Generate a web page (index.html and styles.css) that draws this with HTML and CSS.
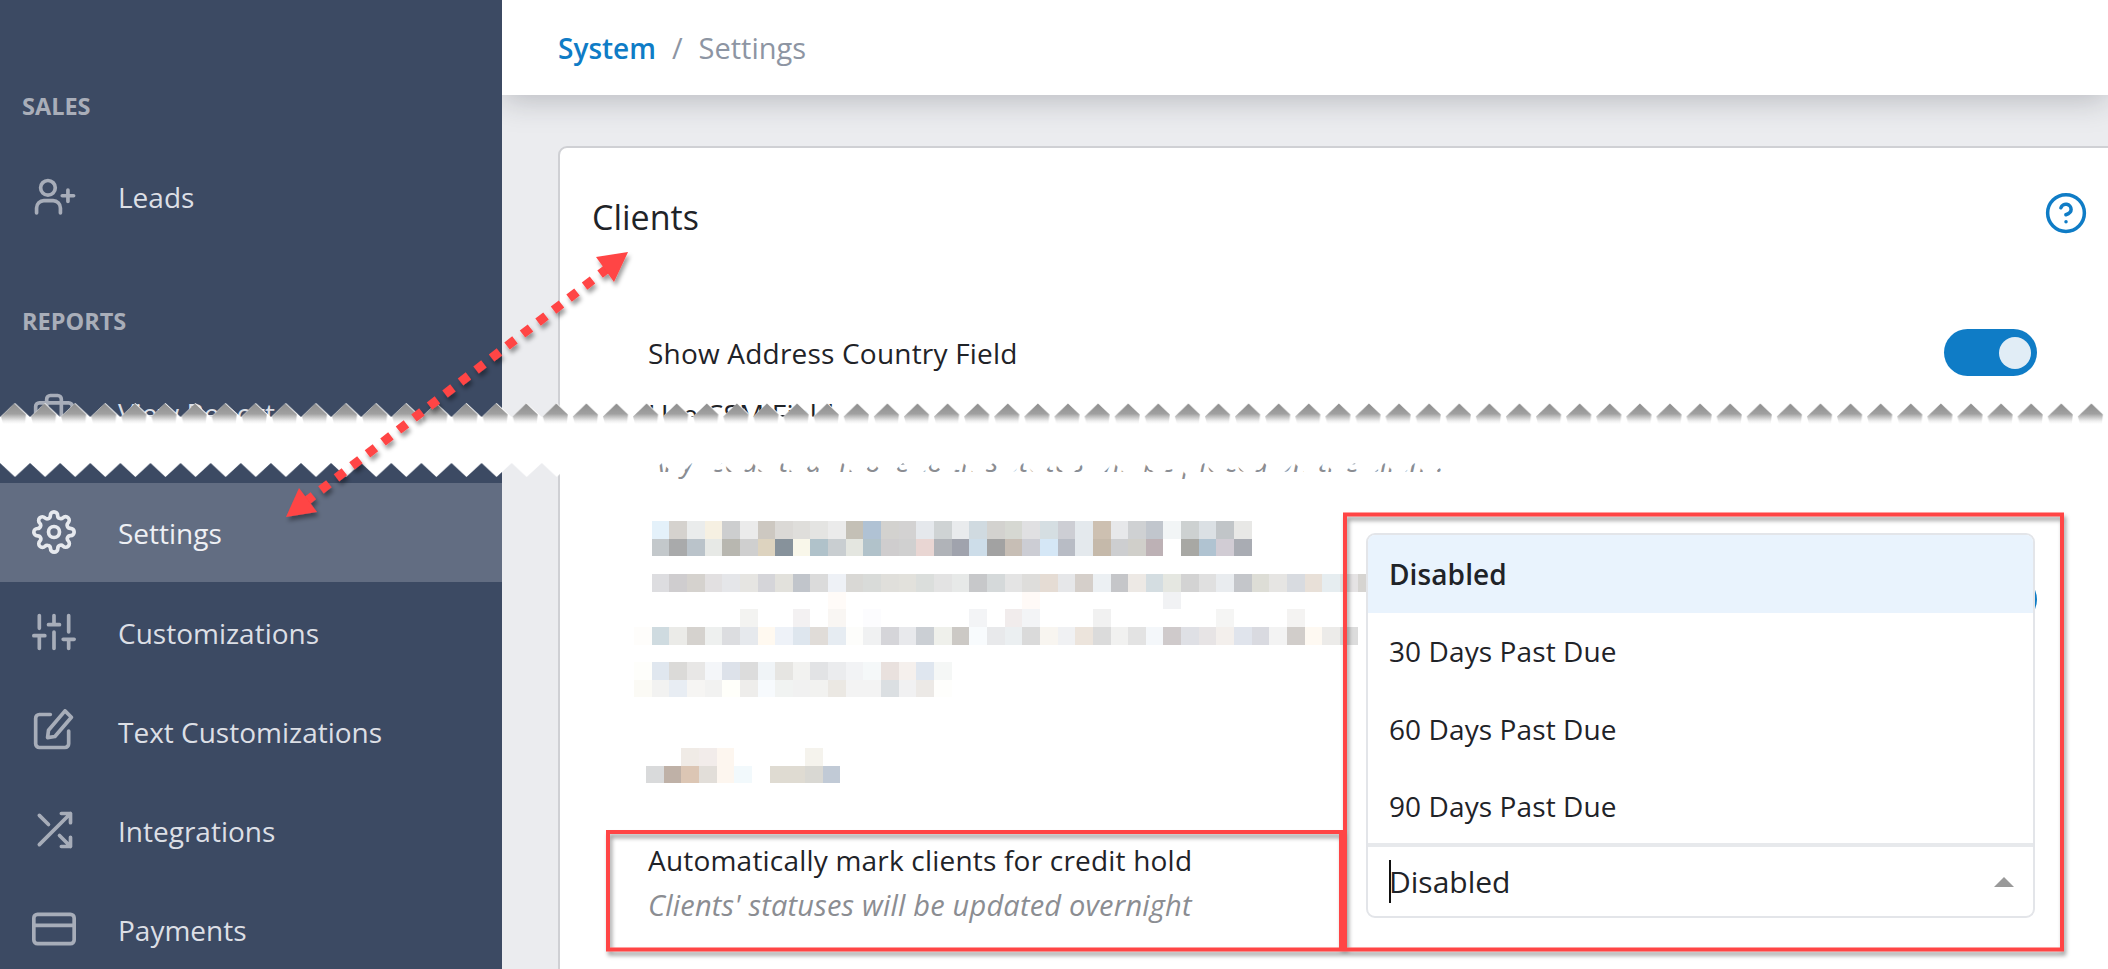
FILE: index.html
```html
<!DOCTYPE html>
<html lang="en">
<head>
<meta charset="utf-8">
<title>System / Settings</title>
<link rel="stylesheet" href="styles.css">
</head>
<body>
<div class="page">
  <aside class="sidebar">
    <div class="section-title first">SALES</div>
    <a class="nav-item leads">
      <svg class="icon" viewBox="0 0 24 24"><circle cx="8.7" cy="7" r="4"/><path d="M2.5 20.7V18a4 4 0 0 1 4-4h5a4 4 0 0 1 4 4v2.7"/><path d="M19.6 8.2v6.2M16.5 11.3h6.2"/></svg>
      <span>Leads</span>
    </a>
    <div class="section-title">REPORTS</div>
    <a class="nav-item torn">
      <svg class="icon" viewBox="0 0 24 24"><rect x="2" y="7" width="20" height="14" rx="2"/><path d="M16 21V5a2 2 0 0 0-2-2h-4a2 2 0 0 0-2 2v16"/></svg>
      <span>View Report</span>
    </a>
    <a class="nav-item active">
      <svg class="icon" viewBox="0 0 24 24"><circle cx="12" cy="12" r="3"/><path d="M19.4 15a1.65 1.65 0 0 0 .33 1.82l.06.06a2 2 0 0 1 0 2.83 2 2 0 0 1-2.83 0l-.06-.06a1.65 1.65 0 0 0-1.82-.33 1.65 1.65 0 0 0-1 1.51V21a2 2 0 0 1-2 2 2 2 0 0 1-2-2v-.09A1.65 1.65 0 0 0 9 19.4a1.65 1.65 0 0 0-1.82.33l-.06.06a2 2 0 0 1-2.83 0 2 2 0 0 1 0-2.83l.06-.06a1.65 1.65 0 0 0 .33-1.82 1.65 1.65 0 0 0-1.51-1H3a2 2 0 0 1-2-2 2 2 0 0 1 2-2h.09A1.65 1.65 0 0 0 4.6 9a1.65 1.65 0 0 0-.33-1.82l-.06-.06a2 2 0 0 1 0-2.83 2 2 0 0 1 2.83 0l.06.06a1.65 1.65 0 0 0 1.82.33H9a1.65 1.65 0 0 0 1-1.51V3a2 2 0 0 1 2-2 2 2 0 0 1 2 2v.09a1.65 1.65 0 0 0 1 1.51 1.65 1.65 0 0 0 1.82-.33l.06-.06a2 2 0 0 1 2.83 0 2 2 0 0 1 0 2.83l-.06.06a1.65 1.65 0 0 0-.33 1.82V9a1.65 1.65 0 0 0 1.51 1H21a2 2 0 0 1 2 2 2 2 0 0 1-2 2h-.09a1.65 1.65 0 0 0-1.51 1z"/></svg>
      <span>Settings</span>
    </a>
    <a class="nav-item">
      <svg class="icon" viewBox="0 0 24 24"><path d="M4 21v-7M4 10V3M12 21v-9M12 8V3M20 21v-5M20 12V3M1 14h6M9 8h6M17 16h6"/></svg>
      <span>Customizations</span>
    </a>
    <a class="nav-item">
      <svg class="icon" viewBox="0 0 24 24"><path d="M10 3H4a2 2 0 0 0-2 2v14a2 2 0 0 0 2 2h14a2 2 0 0 0 2-2v-7"/><path d="M18 1l3.5 3.5-9 10.5-4 .6.5-4z"/></svg>
      <span>Text Customizations</span>
    </a>
    <a class="nav-item">
      <svg class="icon" viewBox="0 0 24 24"><path d="M16 3h5v5M4 20 21 3M21 16v5h-5M15 15l6 6M4 4l5 5"/></svg>
      <span>Integrations</span>
    </a>
    <a class="nav-item">
      <svg class="icon" viewBox="0 0 24 24"><rect x="1" y="4" width="22" height="16" rx="2"/><path d="M1 10h22"/></svg>
      <span>Payments</span>
    </a>
  </aside>

  <main class="main">
    <header class="topbar">
      <span class="crumb-link">System</span>
      <span class="crumb-sep">/</span>
      <span class="crumb-current">Settings</span>
    </header>
    <div class="content">
      <section class="card">
        <div class="card-head">
          <h1 class="card-title">Clients</h1>
          <svg class="help" viewBox="0 0 24 24"><circle cx="12" cy="12" r="10.5"/><path d="M9.09 9a3 3 0 0 1 5.83 1c0 2-3 3-3 3M12 17h.01"/></svg>
        </div>
        <div class="row row-first">
          <span class="label">Show Address Country Field</span>
          <span class="toggle"><span class="knob"></span></span>
        </div>
        <div class="label csm">Use CSM Field</div>
        <div class="hint torn-hint">Any leads that move to this status will be placed on the client.</div>
        <div class="row row-mosaic">
          <svg class="mosaic" viewBox="0 0 42 10" shape-rendering="crispEdges">
            <g>
              <rect x="1" y="0" width="1" height="1" fill="#e4f1fa"/><rect x="2" y="0" width="1" height="1" fill="#d5d2ce"/><rect x="3" y="0" width="1" height="1" fill="#eaecec"/><rect x="4" y="0" width="1" height="1" fill="#f6f0e2"/><rect x="5" y="0" width="1" height="1" fill="#cdcecf"/><rect x="6" y="0" width="1" height="1" fill="#ebebeb"/><rect x="7" y="0" width="1" height="1" fill="#cdc8c1"/><rect x="8" y="0" width="1" height="1" fill="#dbd9d6"/><rect x="9" y="0" width="1" height="1" fill="#dfdedb"/><rect x="10" y="0" width="1" height="1" fill="#e4e4e2"/><rect x="11" y="0" width="1" height="1" fill="#ebebeb"/><rect x="12" y="0" width="1" height="1" fill="#c4c0b6"/><rect x="13" y="0" width="1" height="1" fill="#b0c2d4"/><rect x="14" y="0" width="1" height="1" fill="#d3d2cf"/><rect x="15" y="0" width="1" height="1" fill="#d3d2d2"/><rect x="16" y="0" width="1" height="1" fill="#e5e8ec"/><rect x="17" y="0" width="1" height="1" fill="#cfd3d4"/><rect x="18" y="0" width="1" height="1" fill="#e9ebed"/><rect x="19" y="0" width="1" height="1" fill="#d0dae0"/><rect x="20" y="0" width="1" height="1" fill="#d3d2cf"/><rect x="21" y="0" width="1" height="1" fill="#d6d8d2"/><rect x="22" y="0" width="1" height="1" fill="#e0e0e2"/><rect x="23" y="0" width="1" height="1" fill="#d5dee2"/><rect x="24" y="0" width="1" height="1" fill="#cdced4"/><rect x="25" y="0" width="1" height="1" fill="#e4e9ed"/><rect x="26" y="0" width="1" height="1" fill="#cdc0b1"/><rect x="27" y="0" width="1" height="1" fill="#e7e8ea"/><rect x="28" y="0" width="1" height="1" fill="#cfd1d3"/><rect x="29" y="0" width="1" height="1" fill="#c1c6cd"/><rect x="30" y="0" width="1" height="1" fill="#f2f5f6"/><rect x="31" y="0" width="1" height="1" fill="#cdd1d1"/><rect x="32" y="0" width="1" height="1" fill="#dbe0e4"/><rect x="33" y="0" width="1" height="1" fill="#c1c5c8"/><rect x="34" y="0" width="1" height="1" fill="#e8e8e6"/>
            </g>
            <g>
              <rect x="1" y="1" width="1" height="1" fill="#c3c8cb"/><rect x="2" y="1" width="1" height="1" fill="#a9aaab"/><rect x="3" y="1" width="1" height="1" fill="#bac3ca"/><rect x="4" y="1" width="1" height="1" fill="#e7e9e6"/><rect x="5" y="1" width="1" height="1" fill="#b8b7b0"/><rect x="6" y="1" width="1" height="1" fill="#cfcfcf"/><rect x="7" y="1" width="1" height="1" fill="#ddd3bf"/><rect x="8" y="1" width="1" height="1" fill="#87929b"/><rect x="9" y="1" width="1" height="1" fill="#f9f7ea"/><rect x="10" y="1" width="1" height="1" fill="#b0c2ca"/><rect x="11" y="1" width="1" height="1" fill="#c9ced1"/><rect x="12" y="1" width="1" height="1" fill="#e4e6e0"/><rect x="13" y="1" width="1" height="1" fill="#b1c2ca"/><rect x="14" y="1" width="1" height="1" fill="#cfcdce"/><rect x="15" y="1" width="1" height="1" fill="#d0d0d0"/><rect x="16" y="1" width="1" height="1" fill="#e9d6d3"/><rect x="17" y="1" width="1" height="1" fill="#b0b3b8"/><rect x="18" y="1" width="1" height="1" fill="#a0a3ad"/><rect x="19" y="1" width="1" height="1" fill="#cddde9"/><rect x="20" y="1" width="1" height="1" fill="#a2a2a2"/><rect x="21" y="1" width="1" height="1" fill="#c7beb5"/><rect x="22" y="1" width="1" height="1" fill="#cccdd4"/><rect x="23" y="1" width="1" height="1" fill="#d5e7f6"/><rect x="24" y="1" width="1" height="1" fill="#b8bcc5"/><rect x="25" y="1" width="1" height="1" fill="#e4e9ed"/><rect x="26" y="1" width="1" height="1" fill="#c5b9aa"/><rect x="27" y="1" width="1" height="1" fill="#cdced0"/><rect x="28" y="1" width="1" height="1" fill="#d0cfca"/><rect x="29" y="1" width="1" height="1" fill="#bdb1b5"/><rect x="31" y="1" width="1" height="1" fill="#a8a8a4"/><rect x="32" y="1" width="1" height="1" fill="#b0c3d1"/><rect x="33" y="1" width="1" height="1" fill="#d1ccd4"/><rect x="34" y="1" width="1" height="1" fill="#a9acb3"/>
            </g>
            <g>
              <rect x="1" y="3" width="1" height="1" fill="#dddde0"/><rect x="2" y="3" width="1" height="1" fill="#cfcdcf"/><rect x="3" y="3" width="1" height="1" fill="#d5d2ce"/><rect x="4" y="3" width="1" height="1" fill="#e2e0e1"/><rect x="5" y="3" width="1" height="1" fill="#e5e6e9"/><rect x="6" y="3" width="1" height="1" fill="#e6e5e2"/><rect x="7" y="3" width="1" height="1" fill="#d5d5d9"/><rect x="8" y="3" width="1" height="1" fill="#e2e1dc"/><rect x="9" y="3" width="1" height="1" fill="#c1c5cb"/><rect x="10" y="3" width="1" height="1" fill="#dbdbdb"/><rect x="11" y="3" width="1" height="1" fill="#eef1f6"/><rect x="12" y="3" width="1" height="1" fill="#d9d8d5"/><rect x="13" y="3" width="1" height="1" fill="#d9dbd9"/><rect x="14" y="3" width="1" height="1" fill="#e0dfdb"/><rect x="15" y="3" width="1" height="1" fill="#e2e1dc"/><rect x="16" y="3" width="1" height="1" fill="#dbdedc"/><rect x="17" y="3" width="1" height="1" fill="#e3e3e3"/><rect x="18" y="3" width="1" height="1" fill="#e7e9e8"/><rect x="19" y="3" width="1" height="1" fill="#c7c8ca"/><rect x="20" y="3" width="1" height="1" fill="#d5d9da"/><rect x="21" y="3" width="1" height="1" fill="#e4e4e4"/><rect x="22" y="3" width="1" height="1" fill="#dedddb"/><rect x="23" y="3" width="1" height="1" fill="#e5dcd4"/><rect x="24" y="3" width="1" height="1" fill="#e6e7e9"/><rect x="25" y="3" width="1" height="1" fill="#d5cfca"/><rect x="26" y="3" width="1" height="1" fill="#ecf0f3"/><rect x="27" y="3" width="1" height="1" fill="#c5c6c9"/><rect x="28" y="3" width="1" height="1" fill="#ede9e5"/><rect x="29" y="3" width="1" height="1" fill="#d4dde1"/><rect x="30" y="3" width="1" height="1" fill="#e5e7e1"/><rect x="31" y="3" width="1" height="1" fill="#d3d3d3"/><rect x="32" y="3" width="1" height="1" fill="#e0e0e0"/><rect x="33" y="3" width="1" height="1" fill="#e9ecef"/><rect x="34" y="3" width="1" height="1" fill="#c4c6ca"/><rect x="35" y="3" width="1" height="1" fill="#ddddd6"/><rect x="36" y="3" width="1" height="1" fill="#e6e5e3"/><rect x="37" y="3" width="1" height="1" fill="#d8dbe0"/><rect x="38" y="3" width="1" height="1" fill="#e8e0d8"/><rect x="39" y="3" width="1" height="1" fill="#e6edf0"/><rect x="40" y="3" width="1" height="1" fill="#e5e3e4"/><rect x="41" y="3" width="1" height="1" fill="#d6d4d1"/>
            </g>
            <g>
              <rect x="11" y="4" width="1" height="1" fill="#fffbf8"/><rect x="22" y="4" width="1" height="1" fill="#fffaf7"/><rect x="30" y="4" width="1" height="1" fill="#f1f2f4"/>
              <rect x="6" y="5" width="1" height="1" fill="#f3f3f1"/><rect x="9" y="5" width="1" height="1" fill="#f3f1f2"/><rect x="11" y="5" width="1" height="1" fill="#f9f6f3"/><rect x="13" y="5" width="1" height="1" fill="#fcfcfe"/><rect x="19" y="5" width="1" height="1" fill="#f3f4f6"/><rect x="21" y="5" width="1" height="1" fill="#f1ecec"/><rect x="22" y="5" width="1" height="1" fill="#f3f4f6"/><rect x="26" y="5" width="1" height="1" fill="#f1f1f1"/><rect x="33" y="5" width="1" height="1" fill="#f5f5f4"/><rect x="37" y="5" width="1" height="1" fill="#f4f3f2"/>
            </g>
            <g>
              <rect x="0" y="6" width="1" height="1" fill="#fefdfb"/><rect x="1" y="6" width="1" height="1" fill="#cfdbe0"/><rect x="2" y="6" width="1" height="1" fill="#ebebe8"/><rect x="3" y="6" width="1" height="1" fill="#d5d2ce"/><rect x="4" y="6" width="1" height="1" fill="#eef0ef"/><rect x="5" y="6" width="1" height="1" fill="#dcdde0"/><rect x="6" y="6" width="1" height="1" fill="#e6e9ed"/><rect x="7" y="6" width="1" height="1" fill="#fff9f0"/><rect x="8" y="6" width="1" height="1" fill="#eef2f8"/><rect x="9" y="6" width="1" height="1" fill="#dee6ee"/><rect x="10" y="6" width="1" height="1" fill="#e0dcd8"/><rect x="11" y="6" width="1" height="1" fill="#e6ecf2"/><rect x="12" y="6" width="1" height="1" fill="#fdfdfb"/><rect x="13" y="6" width="1" height="1" fill="#f0f1f2"/><rect x="14" y="6" width="1" height="1" fill="#d5d5d9"/><rect x="15" y="6" width="1" height="1" fill="#e8e9ec"/><rect x="16" y="6" width="1" height="1" fill="#cbcfd4"/><rect x="17" y="6" width="1" height="1" fill="#eff0eb"/><rect x="18" y="6" width="1" height="1" fill="#ccc9c5"/><rect x="19" y="6" width="1" height="1" fill="#f8fbfd"/><rect x="20" y="6" width="1" height="1" fill="#e8e9eb"/><rect x="21" y="6" width="1" height="1" fill="#ebeff1"/><rect x="22" y="6" width="1" height="1" fill="#dadada"/><rect x="23" y="6" width="1" height="1" fill="#f8f5f0"/><rect x="24" y="6" width="1" height="1" fill="#f0f1f3"/><rect x="25" y="6" width="1" height="1" fill="#ece4dc"/><rect x="26" y="6" width="1" height="1" fill="#dbdbdb"/><rect x="27" y="6" width="1" height="1" fill="#f1f1f0"/><rect x="28" y="6" width="1" height="1" fill="#e3e3e3"/><rect x="29" y="6" width="1" height="1" fill="#f4f7fa"/><rect x="30" y="6" width="1" height="1" fill="#cfcacb"/><rect x="31" y="6" width="1" height="1" fill="#dfe0e5"/><rect x="32" y="6" width="1" height="1" fill="#e7e4e5"/><rect x="33" y="6" width="1" height="1" fill="#f3efec"/><rect x="34" y="6" width="1" height="1" fill="#e0e4ec"/><rect x="35" y="6" width="1" height="1" fill="#d9dae0"/><rect x="36" y="6" width="1" height="1" fill="#f3f3f3"/><rect x="37" y="6" width="1" height="1" fill="#d1cdca"/><rect x="38" y="6" width="1" height="1" fill="#fef9f2"/><rect x="39" y="6" width="1" height="1" fill="#ecebe9"/><rect x="40" y="6" width="1" height="1" fill="#dcdcdc"/>
            </g>
            <g>
              <rect x="0" y="8" width="1" height="1" fill="#fefefb"/><rect x="1" y="8" width="1" height="1" fill="#e0e7ef"/><rect x="2" y="8" width="1" height="1" fill="#dbdad8"/><rect x="3" y="8" width="1" height="1" fill="#e8e7e6"/><rect x="4" y="8" width="1" height="1" fill="#f4f6f9"/><rect x="5" y="8" width="1" height="1" fill="#dde2ea"/><rect x="6" y="8" width="1" height="1" fill="#dcdcdc"/><rect x="7" y="8" width="1" height="1" fill="#f0f4f7"/><rect x="8" y="8" width="1" height="1" fill="#e6e5e2"/><rect x="9" y="8" width="1" height="1" fill="#f2f2f0"/><rect x="10" y="8" width="1" height="1" fill="#e2e3e5"/><rect x="11" y="8" width="1" height="1" fill="#ebecee"/><rect x="12" y="8" width="1" height="1" fill="#f2f3f5"/><rect x="13" y="8" width="1" height="1" fill="#f5f8f9"/><rect x="14" y="8" width="1" height="1" fill="#e9e1de"/><rect x="15" y="8" width="1" height="1" fill="#f5f0ed"/><rect x="16" y="8" width="1" height="1" fill="#dfe6ef"/><rect x="17" y="8" width="1" height="1" fill="#f5f7f6"/>
              <rect x="0" y="9" width="1" height="1" fill="#fbfaf5"/><rect x="1" y="9" width="1" height="1" fill="#f2f2f1"/><rect x="2" y="9" width="1" height="1" fill="#e8edf3"/><rect x="3" y="9" width="1" height="1" fill="#f6f5f3"/><rect x="4" y="9" width="1" height="1" fill="#f2f2f1"/><rect x="5" y="9" width="1" height="1" fill="#fffffa"/><rect x="6" y="9" width="1" height="1" fill="#eeedeb"/><rect x="7" y="9" width="1" height="1" fill="#f7fafd"/><rect x="8" y="9" width="1" height="1" fill="#f1f3f2"/><rect x="9" y="9" width="1" height="1" fill="#f1f1f1"/><rect x="10" y="9" width="1" height="1" fill="#f2f2f0"/><rect x="11" y="9" width="1" height="1" fill="#ebe8e3"/><rect x="12" y="9" width="1" height="1" fill="#f3f3f3"/><rect x="13" y="9" width="1" height="1" fill="#f3f3f3"/><rect x="14" y="9" width="1" height="1" fill="#dbdfe2"/><rect x="15" y="9" width="1" height="1" fill="#f1f1f2"/><rect x="16" y="9" width="1" height="1" fill="#ece9e6"/><rect x="17" y="9" width="1" height="1" fill="#fefefc"/>
            </g>
          </svg>
          <span class="toggle toggle-hidden"><span class="knob"></span></span>
        </div>
        <svg class="mosaic-small" viewBox="0 0 11 2" shape-rendering="crispEdges">
          <rect x="2" y="0" width="1" height="1" fill="#f0ebe6"/><rect x="3" y="0" width="1" height="1" fill="#f2ecea"/><rect x="4" y="0" width="1" height="1" fill="#fdf6ef"/><rect x="9" y="0" width="1" height="1" fill="#f5f3ed"/>
          <rect x="0" y="1" width="1" height="1" fill="#d9dadb"/><rect x="1" y="1" width="1" height="1" fill="#bfb1a7"/><rect x="2" y="1" width="1" height="1" fill="#dcc6b4"/><rect x="3" y="1" width="1" height="1" fill="#e2ded9"/><rect x="4" y="1" width="1" height="1" fill="#fdf6ef"/><rect x="5" y="1" width="1" height="1" fill="#f2f9fc"/><rect x="7" y="1" width="1" height="1" fill="#dfdbd2"/><rect x="8" y="1" width="1" height="1" fill="#dfdbd2"/><rect x="9" y="1" width="1" height="1" fill="#d9d8d3"/><rect x="10" y="1" width="1" height="1" fill="#c1cad6"/>
        </svg>
        <div class="label auto-label">Automatically mark clients for credit hold</div>
        <div class="hint auto-hint">Clients' statuses will be updated overnight</div>
      </section>
    </div>
  </main>

  <div class="dropdown">
    <ul class="options">
      <li class="option selected">Disabled</li>
      <li class="option">30 Days Past Due</li>
      <li class="option">60 Days Past Due</li>
      <li class="option">90 Days Past Due</li>
    </ul>
    <div class="select-input">
      <span class="caret"></span><span class="select-value">Disabled</span>
      <span class="arrow-up"></span>
    </div>
  </div>

  <svg class="tear" viewBox="0 0 2108 74" preserveAspectRatio="none">
    <defs>
      <linearGradient id="tooth-shade" x1="0" y1="0" x2="0" y2="1">
        <stop offset="0" stop-color="#8e8e8e"/>
        <stop offset=".5" stop-color="#a0a0a0"/>
        <stop offset=".85" stop-color="#eeeeee"/>
        <stop offset="1" stop-color="#ffffff"/>
      </linearGradient>
      <pattern id="tooth" patternUnits="userSpaceOnUse" width="30.1" height="74">
        <polygon points="0,14 15,0 30.1,14 30.1,60 15,74 0,60" fill="#fff"/>
        <polygon points="14.5,.5 26,11.5 25,21 3,21 1,13.5" fill="url(#tooth-shade)"/>
      </pattern>
    </defs>
    <rect x="0" y="0" width="2108" height="74" fill="url(#tooth)"/>
  </svg>

  <svg class="annotations" viewBox="0 0 2108 969">
    <defs>
      <filter id="drop" x="-5%" y="-5%" width="110%" height="110%">
        <feDropShadow dx="2" dy="4" stdDeviation="2" flood-color="#000" flood-opacity=".38"/>
      </filter>
    </defs>
    <g filter="url(#drop)" class="marks">
      <rect x="608" y="832" width="733" height="117.5"/>
      <rect x="1345" y="514.5" width="717" height="435"/>
      <path class="dash" d="M608 268 304 503"/>
      <polygon points="628,252 596,257 614,282"/>
      <polygon points="286,517 299,488 317,512"/>
    </g>
  </svg>
</div>
</body>
</html>
```

FILE: styles.css
```css
* { box-sizing: border-box; }
html, body { margin: 0; height: 100%; }
body {
  font-family: "Open Sans", "Noto Sans", sans-serif;
  font-size: 28px;
  letter-spacing: 0.1px;
  color: #1f2328;
  background: #ebecef;
  overflow: hidden;
}
.page {
  position: relative;
  display: flex;
  width: 2108px;
  height: 969px;
  overflow: hidden;
}

/* sidebar */
.sidebar {
  flex: 0 0 502px;
  height: 969px;
  background: #3c4a63;
  padding-top: 81px;
  position: relative;
  z-index: 2;
}
.section-title {
  height: 50px;
  margin-top: 49.5px;
  padding-left: 22px;
  line-height: 50px;
  font-size: 23.5px;
  font-weight: 700;
  letter-spacing: 0;
  color: #a9aeb9;
}
.section-title.first { margin-top: 0; margin-bottom: 16.5px; }
.section-title + .nav-item.torn { margin-top: 16.5px; }
.nav-item {
  display: flex;
  align-items: center;
  gap: 42px;
  height: 99.2px;
  padding-left: 32px;
  color: #dcdfe5;
  letter-spacing: 0;
}
.nav-item span { padding-top: 2px; }
.nav-item.leads span { padding-top: 0; }
.nav-item.torn { margin-bottom: 21px; }
.nav-item.active { background: #626d82; color: #eef0f4; }
.icon {
  flex: 0 0 44px;
  width: 44px;
  height: 44px;
  fill: none;
  stroke: #a7adb9;
  stroke-width: 2;
  stroke-linecap: round;
  stroke-linejoin: round;
}
.nav-item.active .icon { stroke: #e6e9ee; }

/* main */
.main {
  flex: 1 1 auto;
  min-width: 0;
  display: flex;
  flex-direction: column;
}
.topbar {
  flex: 0 0 95px;
  display: flex;
  align-items: center;
  padding-left: 56px;
  background: #fff;
  font-size: 29px;
  letter-spacing: 0;
  box-shadow: 0 4px 30px rgba(30, 34, 45, .26);
  position: relative;
  z-index: 1;
}
.crumb-link { color: #0f7cc6; font-weight: 600; font-size: 28px; }
.crumb-sep { color: #8d95a3; margin: 0 16px; }
.crumb-current { color: #8d95a3; }
.content { padding: 51px 0 0 56px; }
.card {
  width: 1700px;
  height: 900px;
  background: #fff;
  border: 2px solid #cfd0d4;
  border-radius: 9px;
  padding: 43px 0 0 33px;
}
.card-head {
  display: flex;
  justify-content: space-between;
  align-items: center;
  width: 1494px;
  height: 52px;
}
.card-title {
  margin: 0 0 0 -1px;
  font-size: 34px;
  font-weight: 400;
  line-height: 52px;
  letter-spacing: 0;
  color: #1f2328;
}
.help {
  width: 42px;
  height: 42px;
  margin-top: -8px;
  fill: none;
  stroke: #0f7cc6;
  stroke-width: 2;
  stroke-linecap: round;
  stroke-linejoin: round;
}
.row {
  display: flex;
  justify-content: space-between;
  width: 1389px;
  margin-left: 55px;
}
.row-first { align-items: center; margin-top: 86px; }
.label, .hint { line-height: 34px; }
.label { letter-spacing: 0.2px; }
.label.csm { margin: 21px 0 0 55px; }
.hint {
  font-style: italic;
  font-size: 29px;
  letter-spacing: 0.2px;
  color: #8b8d92;
  margin-left: 55px;
}
.torn-hint { margin-top: 13px; }
.toggle {
  flex: 0 0 93px;
  display: flex;
  justify-content: flex-end;
  align-items: center;
  width: 93px;
  height: 47px;
  padding-right: 6px;
  background: #0f7cc6;
  border-radius: 24px;
}
.knob {
  width: 32px;
  height: 32px;
  border-radius: 50%;
  background: #e1edf6;
}
.row-mosaic { margin-top: 43px; height: 177px; }
.mosaic {
  display: block;
  width: 741.3px;
  height: 176.5px;
  margin-left: -13.6px;
}
.toggle-hidden { margin-top: 55px; }
.mosaic-small {
  display: block;
  width: 194.2px;
  height: 35.3px;
  margin: 49.7px 0 0 53px;
}
.label.auto-label { margin: 60px 0 0 55px; }
.auto-hint { margin-top: 11px; }

/* select menu */
.dropdown {
  position: absolute;
  left: 1366px;
  top: 533px;
  width: 669px;
  height: 385px;
  background: #fff;
  border: 2px solid #e3e5e9;
  border-radius: 9px;
  z-index: 3;
  overflow: hidden;
}
.options {
  height: 312px;
  margin: 0;
  padding: 0;
  list-style: none;
  border-bottom: 4px solid #e7e9ec;
}
.option {
  display: flex;
  align-items: center;
  height: 77.5px;
  padding-left: 21px;
}
.option.selected { background: #e9f3fd; font-weight: 600; }
.select-input {
  display: flex;
  align-items: center;
  height: 69px;
  padding: 0 19px 0 21px;
  font-size: 30px;
  letter-spacing: 0;
}
.caret {
  flex: 0 0 2px;
  width: 2px;
  height: 43px;
  margin-right: -2px;
  background: #111;
}
.select-value { flex: 1 1 auto; }
.arrow-up {
  width: 0;
  height: 0;
  border-left: 10px solid transparent;
  border-right: 10px solid transparent;
  border-bottom: 10px solid #999;
}

/* overlays */
.tear {
  position: absolute;
  left: 0;
  top: 403px;
  width: 2108px;
  height: 74px;
  z-index: 4;
}
.annotations {
  position: absolute;
  left: 0;
  top: 0;
  width: 2108px;
  height: 969px;
  z-index: 5;
  pointer-events: none;
}
.marks rect { fill: none; stroke: #ff4444; stroke-width: 4; }
.marks polygon { fill: #ff4444; }
.marks .dash { fill: none; stroke: #ff4444; stroke-width: 9; stroke-dasharray: 10 9.6; }
```
